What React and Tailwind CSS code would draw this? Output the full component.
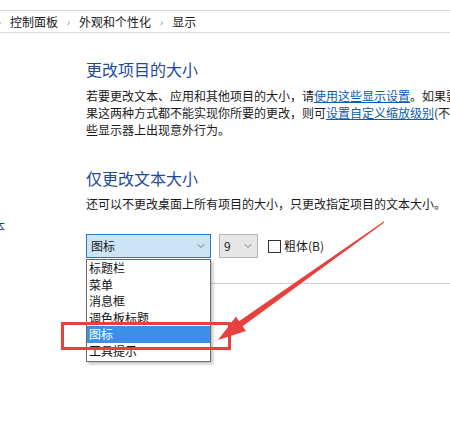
import { ChevronDown } from 'lucide-react'

const font = { fontFamily: '"Microsoft YaHei", "Noto Sans CJK SC", sans-serif' }

const items = ['标题栏', '菜单', '消息框', '调色板标题', '图标', '工具提示']
const selected = 4

function Crumb({ children }) {
  return <span className="text-[#1a1a1a]">{children}</span>
}

function Sep() {
  return <span className="mx-[9px] text-[10px] text-[#8a8a8a]">›</span>
}

export default function App() {
  return (
    <div className="relative h-[439px] w-[450px] overflow-hidden bg-white text-[12px] text-[#1a1a1a]" style={font}>
      {/* breadcrumb */}
      <div className="mt-[10px] flex h-[23px] items-center border-y border-[#d9d9d9] whitespace-nowrap">
        <span className="-ml-[2px] mr-[9px] text-[10px] text-[#8a8a8a]">›</span>
        <Crumb>控制面板</Crumb>
        <Sep />
        <Crumb>外观和个性化</Crumb>
        <Sep />
        <Crumb>显示</Crumb>
      </div>

      <div className="flex">
        <div className="w-[86px] shrink-0 pt-[184px]">
          <span className="-ml-[7px] block text-[12px] text-[#1e3a8a]">本</span>
        </div>

        <div className="min-w-0 flex-1 whitespace-nowrap">
          <h1 className="mt-[25px] text-[16px] leading-[22px] text-[#1e4a9b]">更改项目的大小</h1>
          <div className="mt-[7px] leading-[17px]">
            <p>
              若要更改文本、应用和其他项目的大小，请
              <span className="text-[#0b5cad] underline">使用这些显示设置</span>。如果要
            </p>
            <p>
              果这两种方式都不能实现你所要的更改，则可
              <span className="text-[#0b5cad] underline">设置自定义缩放级别</span>(不
            </p>
            <p>些显示器上出现意外行为。</p>
          </div>

          <h1 className="mt-[29px] text-[16px] leading-[22px] text-[#1e4a9b]">仅更改文本大小</h1>
          <p className="mt-[6px] leading-[17px]">还可以不更改桌面上所有项目的大小，只更改指定项目的文本大小。</p>

          <div className="mt-[22px] flex items-center">
            <div className="flex h-[24px] w-[125px] items-center justify-between border border-[#2a78c8] bg-[#cce4f7] pl-[4px] pr-[3px]">
              <span>图标</span>
              <ChevronDown size={12} strokeWidth={1.5} className="text-[#555]" />
            </div>
            <div className="ml-[8px] flex h-[24px] w-[39px] items-center justify-between border border-[#b5b5b5] bg-[#e6e6e6] pl-[4px] pr-[3px]">
              <span>9</span>
              <ChevronDown size={12} strokeWidth={1.5} className="text-[#555]" />
            </div>
            <div className="ml-[10px] h-[13px] w-[13px] border border-[#333] bg-white" />
            <span className="ml-[3px]">粗体(B)</span>
          </div>

          <div className="mt-[25px] border-t border-[#cfcfcf]" />
        </div>
      </div>

      {/* dropdown list */}
      <div className="absolute left-[86px] top-[259px] w-[125px] border border-[#6b6b6b] bg-white pb-[2px] text-[12px] shadow-[2px_2px_3px_rgba(0,0,0,0.25)]">
        {items.map((item, i) => (
          <div
            key={item}
            className={
              i === selected
                ? 'h-[16.5px] bg-[#3b8fe8] pl-[2px] leading-[16.5px] text-white'
                : 'h-[16.5px] pl-[2px] leading-[16.5px] text-[#111]'
            }
          >
            {item}
          </div>
        ))}
      </div>

      {/* annotation */}
      <svg className="pointer-events-none absolute inset-0" width="450" height="439">
        <rect x="62.5" y="323.5" width="167" height="25" fill="none" stroke="#e8403c" strokeWidth="3" />
        <polygon
          points="384.3,222.4 383.7,221.6 239,321.3 236,316.5 218,340 246,331.1 242.6,326.3"
          fill="#e8403c"
        />
      </svg>
    </div>
  )
}
